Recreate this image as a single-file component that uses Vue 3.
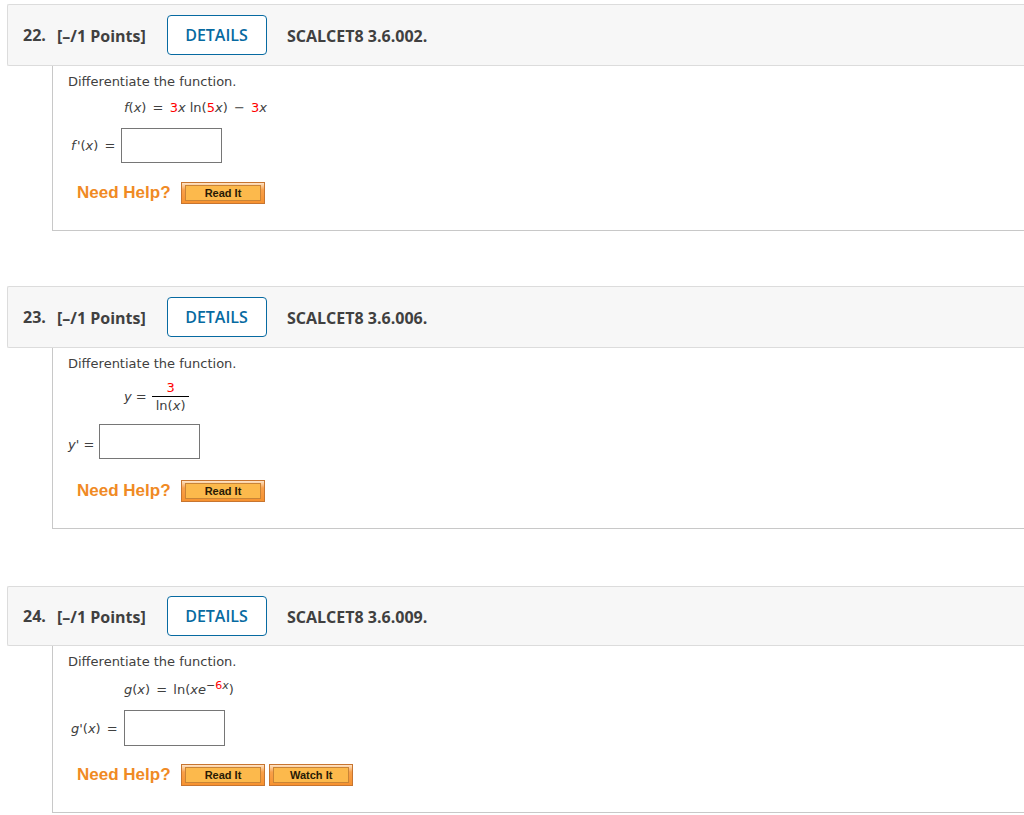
<script setup>
import { ref } from 'vue'

const questions = ref([
  { number: 22, code: 'SCALCET8 3.6.002.', kind: 'product', help: ['Read It'], answer: '' },
  { number: 23, code: 'SCALCET8 3.6.006.', kind: 'quotient', help: ['Read It'], answer: '' },
  { number: 24, code: 'SCALCET8 3.6.009.', kind: 'exponential', help: ['Read It', 'Watch It'], answer: '' },
])
</script>

<template>
  <main class="assignment">
    <article v-for="q in questions" :key="q.number" class="question" :class="q.kind">
      <header class="bar">
        <span class="number">{{ q.number }}.</span>
        <span class="points">[–/1 Points]</span>
        <button type="button" class="details">DETAILS</button>
        <span class="code">{{ q.code }}</span>
      </header>
      <section class="body">
        <p class="prompt">Differentiate the function.</p>

        <div v-if="q.kind === 'product'" class="formula">
          <span><i>f</i>(<i>x</i>) <span class="op">=</span> <b>3</b><i>x</i> ln(<b>5</b><i>x</i>) <span class="op">−</span> <b>3</b><i>x</i></span>
        </div>
        <div v-else-if="q.kind === 'quotient'" class="formula">
          <span><i>y</i> =</span>
          <span class="fraction">
            <span class="top"><b>3</b></span>
            <span class="bottom">ln(<i>x</i>)</span>
          </span>
        </div>
        <div v-else class="formula">
          <span><i>g</i>(<i>x</i>) <span class="op">=</span> ln(<i>xe</i><sup>−<b>6</b><i>x</i></sup>)</span>
        </div>

        <div class="answer">
          <label :for="'answer-' + q.number">
            <template v-if="q.kind === 'product'"><i>f&#8202;</i>'(<i>x</i>) <span class="op">=</span></template>
            <template v-else-if="q.kind === 'quotient'"><i>y'</i> =</template>
            <template v-else><i>g'</i>(<i>x</i>) <span class="op">=</span></template>
          </label>
          <input :id="'answer-' + q.number" v-model="q.answer" type="text" autocomplete="off">
        </div>

        <div class="help">
          <span class="help-title">Need Help?</span>
          <button v-for="item in q.help" :key="item" type="button" class="help-button">
            <span>{{ item }}</span>
          </button>
        </div>
      </section>
    </article>
  </main>
</template>

<style>
body {
  margin: 0;
  background: #fff;
}
</style>

<style scoped>
.assignment {
  padding: 4px 0 0 7px;
  overflow: hidden;
  color: #404040;
  font-family: Verdana, "DejaVu Sans", sans-serif;
  font-size: 13px;
  line-height: 20px;
}
.question {
  margin-bottom: 55px;
}
.question.quotient {
  margin-bottom: 57px;
}
.question:last-child {
  margin-bottom: 0;
}
.bar {
  display: flex;
  align-items: center;
  box-sizing: border-box;
  min-height: 62px;
  padding-left: 15px;
  border: 1px solid #dcdcdc;
  border-right: 0;
  border-radius: 2px 0 0 2px;
  background: #f7f7f7;
  font-family: "Open Sans", sans-serif;
  font-size: 16px;
  font-weight: 700;
  line-height: 22px;
  white-space: nowrap;
}
.exponential .bar {
  min-height: 60px;
}
.number {
  width: 34px;
}
.points {
  width: 110px;
  padding-top: 2px;
}
.details {
  box-sizing: border-box;
  width: 100px;
  height: 40px;
  margin-right: 20px;
  padding: 0 1px 1px 0;
  border: 1px solid #076aa1;
  border-radius: 4px;
  background: #fff;
  color: #076aa1;
  font: 600 16px/22px "Open Sans", sans-serif;
}
.code {
  padding-top: 2px;
}
.body {
  margin-left: 45px;
  padding: 6px 15px 26px;
  border-left: 1px solid #c8c8c8;
  border-bottom: 1px solid #c8c8c8;
}
.prompt {
  margin: 0;
}
.formula {
  display: flex;
  align-items: center;
  margin: 6px 0 10px 56px;
}
.exponential .formula {
  margin: 8px 0 10px 56px;
}
.op {
  margin: 0 2px;
}
b {
  color: #f00;
  font-weight: 400;
}
sup {
  font-size: 11px;
  line-height: 0;
  vertical-align: 5px;
}
.fraction {
  display: flex;
  flex-direction: column;
  margin-left: 5px;
  text-align: center;
  line-height: 16px;
}
.top {
  border-bottom: 1px solid #000;
}
.bottom {
  padding: 1px 4px 0;
}
.answer {
  display: flex;
  align-items: center;
  margin-bottom: 19px;
  padding-left: 3px;
}
.quotient .answer {
  margin-bottom: 21px;
  padding-left: 0;
}
.quotient label {
  padding-top: 6px;
}
.exponential .answer {
  margin-bottom: 18px;
}
.exponential label {
  padding-top: 2px;
}
.answer input {
  box-sizing: border-box;
  width: 101px;
  height: 35px;
  margin: 0 0 0 5px;
  padding: 2px 6px;
  border: 1px solid #767676;
  border-radius: 0;
  background: #fff;
  color: #404040;
  font: inherit;
}
.product input,
.exponential input {
  margin-left: 4px;
}
.exponential input {
  height: 36px;
}
.help {
  display: flex;
  align-items: center;
  gap: 4px;
  padding-left: 9px;
}
.help-title {
  width: 100px;
  color: #f08a24;
  font: 700 17px/20px "Liberation Sans", Arial, sans-serif;
}
.help-button {
  box-sizing: border-box;
  min-width: 84px;
  height: 22px;
  padding: 2px 3px 3px;
  border: 1px solid #c77530;
  border-radius: 0;
  background: linear-gradient(#fde4c8, #f8a04a 35%, #f7922f);
  color: #281a05;
  font: 700 11px/15px "Liberation Sans", Arial, sans-serif;
}
.help-button span {
  display: block;
  padding: 0 16px;
  border: 1px solid #c98436;
  background: #fcb94c;
  line-height: 14px;
}
</style>
